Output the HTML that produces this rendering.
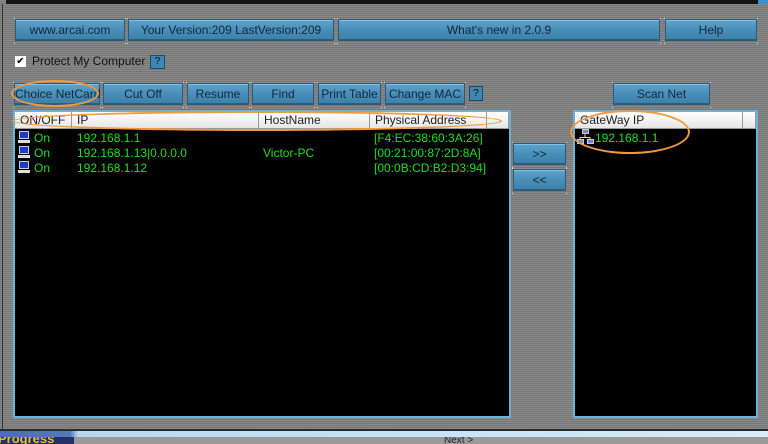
<!DOCTYPE html>
<html><head><meta charset="utf-8">
<style>
*{margin:0;padding:0;box-sizing:border-box}
body{width:768px;height:444px;overflow:hidden;position:relative;font-family:"Liberation Sans",sans-serif;font-size:12px;
background:repeating-linear-gradient(180deg,#8a8a8a 0,#8a8a8a 1px,#767676 1px,#767676 2px);}
.a{position:absolute}
.btn{position:absolute;height:22px;border:1px solid #2c5a78;background:linear-gradient(180deg,#5ea3cc 0%,#4a90ba 45%,#3c80aa 100%);color:#13283a;text-align:center;line-height:20px;font-size:12px;white-space:nowrap;box-shadow:inset 0 1px 0 #86c0e2,inset 0 -1px 0 #2a5f80}
.btn:before,.btn:after{content:"";position:absolute;top:-2px;width:1px;height:24px;border-top:1px solid #ddd;border-bottom:1px solid #ddd;}
.btn:before{left:-2px}.btn:after{right:-2px}
.list{position:absolute;background:#000;border:2px solid #6cb2d6}
.hdr{position:absolute;top:0;height:17px;background:linear-gradient(#fff,#e6e6e6);border-right:1px solid #999;border-bottom:1px solid #999;color:#222;font-size:12px;line-height:17px;padding-left:5px;white-space:nowrap}
.row{position:absolute;color:#22dd22;font-size:12px;white-space:nowrap}
.ov{position:absolute;border:2px solid #f09a40;border-radius:50%}
</style></head><body>
<div class="a" style="left:6px;top:0;width:752px;height:4px;background:#151515"></div>
<div class="a" style="left:758px;top:0;width:10px;height:4px;background:#3a8fd0"></div>
<div class="a" style="left:2px;top:4px;width:1px;height:426px;background:#333"></div>

<div class="btn" style="left:15px;top:19px;width:110px">www.arcai.com</div>
<div class="btn" style="left:128px;top:19px;width:206px">Your Version:209 LastVersion:209</div>
<div class="btn" style="left:338px;top:19px;width:322px">What's new in 2.0.9</div>
<div class="btn" style="left:665px;top:19px;width:92px">Help</div>

<div class="a" style="left:15px;top:56px;width:11px;height:11px;background:#fff;font-size:10px;line-height:11px;text-align:center;color:#000">✔</div>
<div class="a" style="left:32px;top:54px;color:#111;font-size:12px">Protect My Computer</div>
<div class="a" style="left:150px;top:55px;width:15px;height:14px;background:#3f87b2;border:1px solid #1d4a66;color:#111;font-size:10px;text-align:center;line-height:12px">?</div>

<div class="btn" style="left:14px;top:83px;width:86px">Choice NetCard</div>
<div class="btn" style="left:103px;top:83px;width:80px">Cut Off</div>
<div class="btn" style="left:187px;top:83px;width:62px">Resume</div>
<div class="btn" style="left:252px;top:83px;width:62px">Find</div>
<div class="btn" style="left:318px;top:83px;width:63px">Print Table</div>
<div class="btn" style="left:385px;top:83px;width:80px">Change MAC</div>
<div class="a" style="left:469px;top:86px;width:14px;height:15px;background:#3f87b2;border:1px solid #1d4a66;color:#111;font-size:10px;text-align:center;line-height:13px">?</div>
<div class="btn" style="left:613px;top:83px;width:97px">Scan Net</div>

<div class="list" style="left:13px;top:110px;width:498px;height:308px">
 <div class="hdr" style="left:0;width:57px">ON/OFF</div>
 <div class="hdr" style="left:57px;width:187px">IP</div>
 <div class="hdr" style="left:244px;width:111px">HostName</div>
 <div class="hdr" style="left:355px;width:117px">Physical Address</div>
 <div class="hdr" style="left:472px;width:22px"></div>
</div>
<svg class="a" style="left:17px;top:131px" width="14" height="48">
 <rect x="2" y="0" width="10" height="8" fill="#ccc"/><rect x="3" y="1" width="8" height="6" fill="#1a3cd0"/><rect x="1" y="9" width="12" height="3" fill="#ddd"/>
 <rect x="2" y="15" width="10" height="8" fill="#ccc"/><rect x="3" y="16" width="8" height="6" fill="#1a3cd0"/><rect x="1" y="24" width="12" height="3" fill="#ddd"/>
 <rect x="2" y="30" width="10" height="8" fill="#ccc"/><rect x="3" y="31" width="8" height="6" fill="#1a3cd0"/><rect x="1" y="39" width="12" height="3" fill="#ddd"/>
</svg>
<div class="row" style="left:34px;top:131px">On</div>
<div class="row" style="left:34px;top:146px">On</div>
<div class="row" style="left:34px;top:161px">On</div>
<div class="row" style="left:77px;top:131px">192.168.1.1</div>
<div class="row" style="left:77px;top:146px">192.168.1.13|0.0.0.0</div>
<div class="row" style="left:77px;top:161px">192.168.1.12</div>
<div class="row" style="left:263px;top:146px">Victor-PC</div>
<div class="row" style="left:374px;top:131px">[F4:EC:38:60:3A:26]</div>
<div class="row" style="left:374px;top:146px">[00:21:00:87:2D:8A]</div>
<div class="row" style="left:374px;top:161px">[00:0B:CD:B2:D3:94]</div>

<div class="btn" style="left:513px;top:143px;width:53px">&gt;&gt;</div>
<div class="btn" style="left:513px;top:169px;width:53px">&lt;&lt;</div>

<div class="list" style="left:573px;top:110px;width:185px;height:308px">
 <div class="hdr" style="left:0;width:168px">GateWay IP</div>
 <div class="hdr" style="left:168px;width:13px"></div>
</div>
<svg class="a" style="left:577px;top:129px" width="17" height="17">
 <path d="M8 5V9M3 10V8.5H13V10" stroke="#ee0" fill="none"/>
 <rect x="5" y="0" width="7" height="5" fill="#c8ccd8"/><rect x="0" y="10" width="7" height="5" fill="#c8ccd8"/><rect x="10" y="10" width="7" height="5" fill="#c8ccd8"/>
 <rect x="6" y="1" width="5" height="3" fill="#6a8ac0"/><rect x="1" y="11" width="5" height="3" fill="#6a8ac0"/><rect x="11" y="11" width="5" height="3" fill="#6a8ac0"/>
</svg>
<div class="row" style="left:595px;top:131px">192.168.1.1</div>

<div class="ov" style="left:11px;top:80px;width:88px;height:27px"></div>
<div class="ov" style="left:12px;top:111px;width:490px;height:20px"></div>
<div class="ov" style="left:570px;top:110px;width:120px;height:44px"></div>

<div class="a" style="left:0;top:429px;width:768px;height:2px;background:#2a2a2a"></div>
<div class="a" style="left:0;top:431px;width:768px;height:6px;background:linear-gradient(90deg,#4a6eb0 0,#5578b8 70px,#b8d8f0 78px,#d8ecfa 100%)"></div>
<div class="a" style="left:0;top:437px;width:74px;height:7px;background:#23306a;overflow:hidden"><span style="position:absolute;left:-2px;top:-6px;color:#e8c020;font-weight:bold;font-size:13px">Progress</span></div>
<div class="a" style="left:74px;top:437px;width:694px;height:7px;background:#9a9a9a;overflow:hidden"><span style="position:absolute;left:370px;top:-2px;font-size:10px;color:#223">Next &gt;</span></div>
</body></html>
